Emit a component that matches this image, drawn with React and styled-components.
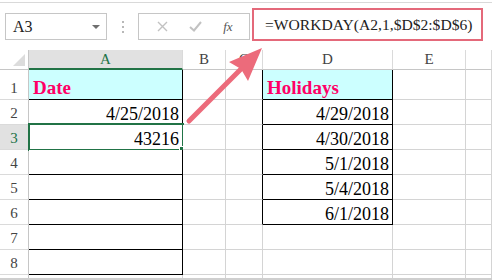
import React from "react";
import styled, { createGlobalStyle } from "styled-components";

const Global = createGlobalStyle`
  html, body {
    margin: 0;
    padding: 0;
    background: #fff;
  }
  body {
    width: 492px;
    height: 280px;
    overflow: hidden;
    font-family: "Liberation Serif", "Times New Roman", serif;
  }
`;

const Page = styled.div`
  position: relative;
  width: 492px;
  height: 280px;
  overflow: hidden;
  background: #fff;
`;

// formula bar strip
const TopBar = styled.div`
  display: flex;
  align-items: flex-end;
  height: 38px;
  margin-top: 2px;
  border-top: 1px solid #d9d9d9;
  padding-left: 5px;
  box-sizing: border-box;
`;

const NameBox = styled.div`
  display: flex;
  align-items: center;
  justify-content: space-between;
  width: 102px;
  height: 27px;
  box-sizing: border-box;
  border: 1px solid #c6c6c6;
  padding: 0 6px 0 7px;
  font-size: 16px;
  color: #222;
`;

const Caret = styled.span`
  width: 0;
  height: 0;
  border-left: 4px solid transparent;
  border-right: 4px solid transparent;
  border-top: 4px solid #6f6f6f;
`;

const Dots = styled.div`
  display: flex;
  flex-direction: column;
  align-items: center;
  justify-content: center;
  gap: 3px;
  width: 31px;
  height: 27px;
  span {
    width: 2px;
    height: 2px;
    background: #b8b8b8;
  }
`;

const FxBox = styled.div`
  display: flex;
  align-items: center;
  justify-content: space-around;
  width: 112px;
  height: 27px;
  box-sizing: border-box;
  border: 1px solid #c6c6c6;
  padding: 0 6px 0 8px;
`;

const Fx = styled.span`
  font-style: italic;
  font-size: 13px;
  color: #555;
`;

const FormulaBox = styled.div`
  display: flex;
  align-items: center;
  width: 231px;
  height: 33px;
  margin-left: 2px;
  margin-bottom: -1px;
  box-sizing: border-box;
  border: 2px solid #e4697a;
  padding-left: 11px;
  font-size: 15.6px;
  color: #222;
  white-space: nowrap;
`;

// grid
const Sheet = styled.div`
  display: grid;
  grid-template-columns: 29px 154px 43px 37px 130px 73px 26px;
  grid-template-rows: 20px 30px repeat(9, 25px);
  margin-top: 10px;
  height: 228px;
  overflow: hidden;
  border-bottom: 2px solid #cfcfcf;
`;

const Corner = styled.div`
  position: relative;
  border-right: 1px solid #c6c6c6;
  border-bottom: 1px solid #c6c6c6;
  &::after {
    content: "";
    position: absolute;
    right: 3px;
    bottom: 3px;
    width: 0;
    height: 0;
    border-left: 12px solid transparent;
    border-bottom: 12px solid #dcdcdc;
  }
`;

const ColHead = styled.div`
  display: flex;
  align-items: center;
  justify-content: center;
  font-size: 15px;
  background: ${(p) => (p.$active ? "#e1e1e1" : "#fff")};
  color: ${(p) => (p.$active ? "#217346" : "#444")};
  border-right: 1px solid #dadada;
  border-bottom: ${(p) => (p.$active ? "2px solid #217346" : "1px solid #c6c6c6")};
`;

const RowHead = styled.div`
  display: flex;
  align-items: flex-end;
  justify-content: center;
  padding-bottom: 2px;
  box-sizing: border-box;
  font-size: 15px;
  background: ${(p) => (p.$active ? "#e1e1e1" : "#fff")};
  color: ${(p) => (p.$active ? "#217346" : "#444")};
  border-right: 1px solid #c6c6c6;
  border-bottom: 1px solid #dadada;
`;

const Cell = styled.div`
  position: relative;
  display: flex;
  align-items: flex-end;
  justify-content: ${(p) => (p.$left ? "flex-start" : "flex-end")};
  box-sizing: border-box;
  padding: ${(p) => (p.$left ? "0 0 1px 4px" : "0 3px 0 0")};
  line-height: 20px;
  font-weight: ${(p) => (p.$bold ? "bold" : "normal")};
  font-size: ${(p) => (p.$bold ? "19px" : "18px")};
  color: ${(p) => (p.$bold ? "#ff0066" : "#000")};
  background: ${(p) => (p.$head ? "#ccffff" : "#fff")};
  border-right: 1px solid ${(p) => (p.$r ? "#000" : "#d4d4d4")};
  border-bottom: 1px solid ${(p) => (p.$b ? "#000" : "#d4d4d4")};
`;

const Active = styled.div`
  position: absolute;
  left: -1px;
  top: -2px;
  right: -2px;
  bottom: -2px;
  border: 2px solid #217346;
  pointer-events: none;
  &::after {
    content: "";
    position: absolute;
    right: -4px;
    bottom: -4px;
    width: 5px;
    height: 5px;
    background: #217346;
    border: 1px solid #fff;
  }
`;

const Arrow = styled.svg`
  position: absolute;
  left: 0;
  top: 0;
  pointer-events: none;
`;

const cols = ["A", "B", "C", "D", "E", ""];

const colA = ["Date", "4/25/2018", "43216", "", "", "", "", "", ""];
const colD = ["Holidays", "4/29/2018", "4/30/2018", "5/1/2018", "5/4/2018", "6/1/2018", "", "", ""];

export default function App() {
  return (
    <Page>
      <Global />
      <TopBar>
        <NameBox>
          A3
          <Caret />
        </NameBox>
        <Dots>
          <span />
          <span />
          <span />
        </Dots>
        <FxBox>
          <svg width="11" height="11" viewBox="0 0 11 11">
            <path d="M1 1L10 10M10 1L1 10" stroke="#c2c2c2" strokeWidth="1.4" />
          </svg>
          <svg width="13" height="11" viewBox="0 0 13 11">
            <path d="M1 6L5 9.5L12 1" stroke="#c2c2c2" strokeWidth="2" fill="none" />
          </svg>
          <Fx>fx</Fx>
        </FxBox>
        <FormulaBox>=WORKDAY(A2,1,$D$2:$D$6)</FormulaBox>
      </TopBar>

      <Sheet>
        <Corner />
        {cols.map((c) => (
          <ColHead key={c || "f"} $active={c === "A"}>
            {c}
          </ColHead>
        ))}
        {colA.map((a, i) => {
          const row = i + 1;
          const inD = row <= 6;
          const inA = row <= 8;
          return (
            <React.Fragment key={row}>
              <RowHead $active={row === 3}>{row <= 8 ? row : ""}</RowHead>
              <Cell $r={inA} $b={inA} $left={row === 1} $bold={row === 1} $head={row === 1}>
                {a}
                {row === 3 && <Active />}
              </Cell>
              <Cell />
              <Cell $r={inD} />
              <Cell $r={inD} $b={inD} $left={row === 1} $bold={row === 1} $head={row === 1}>
                {colD[i]}
              </Cell>
              <Cell />
              <Cell />
            </React.Fragment>
          );
        })}
      </Sheet>

      <Arrow width="492" height="280" viewBox="0 0 492 280">
        <line x1="189" y1="121" x2="243" y2="67" stroke="#ec6b7b" strokeWidth="5" strokeLinecap="round" />
        <polygon points="262,48 229,62 241,69 248,81" fill="#ec6b7b" />
      </Arrow>
    </Page>
  );
}
